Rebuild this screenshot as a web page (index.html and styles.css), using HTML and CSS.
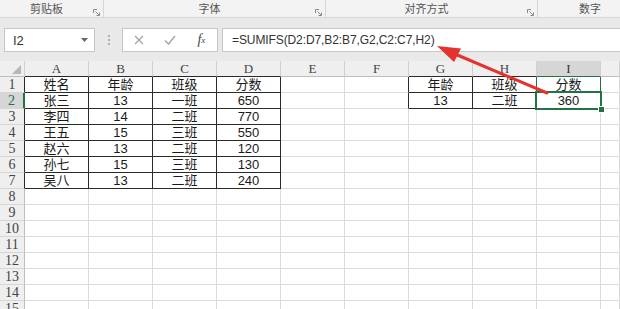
FILE: index.html
```html
<!DOCTYPE html>
<html>
<head>
<meta charset="utf-8">
<link rel="stylesheet" href="styles.css">
</head>
<body>
<div class="app">
  <div class="ribbon">
    <div class="grp w1"><span class="lbl">剪贴板</span><svg class="launch" width="7" height="7" viewBox="0 0 7 7"><path d="M0.5 4V0.5H4" fill="none" stroke="#8a8a8a"/><path d="M2.5 2.5L6 6M6.5 3.5V6.5H3.5" fill="none" stroke="#8a8a8a"/></svg></div>
    <div class="grp w2"><span class="lbl">字体</span><svg class="launch" width="7" height="7" viewBox="0 0 7 7"><path d="M0.5 4V0.5H4" fill="none" stroke="#8a8a8a"/><path d="M2.5 2.5L6 6M6.5 3.5V6.5H3.5" fill="none" stroke="#8a8a8a"/></svg></div>
    <div class="grp w3"><span class="lbl">对齐方式</span><svg class="launch" width="7" height="7" viewBox="0 0 7 7"><path d="M0.5 4V0.5H4" fill="none" stroke="#8a8a8a"/><path d="M2.5 2.5L6 6M6.5 3.5V6.5H3.5" fill="none" stroke="#8a8a8a"/></svg></div>
    <div class="grp w4"><span class="lbl">数字</span></div>
  </div>
  <div class="fbar">
    <div class="namebox"><span class="nm">I2</span><svg width="7" height="4" viewBox="0 0 7 4"><path d="M0 0H7L3.5 4Z" fill="#666"/></svg></div>
    <div class="dots"><i></i><i></i><i></i></div>
    <div class="btns">
      <span class="btn"><svg width="10" height="10" viewBox="0 0 10 10"><path d="M1 1L9 9M9 1L1 9" stroke="#a0a0a0" stroke-width="1.2"/></svg></span>
      <span class="btn"><svg width="12" height="10" viewBox="0 0 12 10"><path d="M1 5.5L4.5 9L11 1" fill="none" stroke="#a0a0a0" stroke-width="1.3"/></svg></span>
      <span class="btn fx"><i>f</i><sub>x</sub></span>
    </div>
    <div class="formula">=SUMIFS(D2:D7,B2:B7,G2,C2:C7,H2)</div>
  </div>
  <div class="sheet">
    <div class="c ch corner"><svg width="9" height="9" viewBox="0 0 9 9"><path d="M9 0V9H0Z" fill="#b8b8b8"/></svg></div>
    <div class="c ch tb">A</div><div class="c ch tb">B</div><div class="c ch tb">C</div><div class="c ch tb">D</div>
    <div class="c ch">E</div><div class="c ch">F</div><div class="c ch tb">G</div><div class="c ch tb">H</div><div class="c ch selcol">I</div><div class="c ch"></div>

    <div class="c rh tr">1</div>
    <div class="c t">姓名</div><div class="c t">年龄</div><div class="c t">班级</div><div class="c t">分数</div>
    <div class="c"></div><div class="c tr"></div><div class="c t">年龄</div><div class="c t gr">班级</div><div class="c gr">分数</div><div class="c"></div>

    <div class="c rh act">2</div>
    <div class="c t">张三</div><div class="c t">13</div><div class="c t">一班</div><div class="c t">650</div>
    <div class="c"></div><div class="c tr"></div><div class="c t">13</div><div class="c t">二班</div><div class="c t">360</div><div class="c"></div>

    <div class="c rh tr">3</div>
    <div class="c t">李四</div><div class="c t">14</div><div class="c t">二班</div><div class="c t">770</div>
    <div class="c"></div><div class="c"></div><div class="c"></div><div class="c"></div><div class="c"></div><div class="c"></div>

    <div class="c rh tr">4</div>
    <div class="c t">王五</div><div class="c t">15</div><div class="c t">三班</div><div class="c t">550</div>
    <div class="c"></div><div class="c"></div><div class="c"></div><div class="c"></div><div class="c"></div><div class="c"></div>

    <div class="c rh tr">5</div>
    <div class="c t">赵六</div><div class="c t">13</div><div class="c t">二班</div><div class="c t">120</div>
    <div class="c"></div><div class="c"></div><div class="c"></div><div class="c"></div><div class="c"></div><div class="c"></div>

    <div class="c rh tr">6</div>
    <div class="c t">孙七</div><div class="c t">15</div><div class="c t">三班</div><div class="c t">130</div>
    <div class="c"></div><div class="c"></div><div class="c"></div><div class="c"></div><div class="c"></div><div class="c"></div>

    <div class="c rh tr">7</div>
    <div class="c t">吴八</div><div class="c t">13</div><div class="c t">二班</div><div class="c t">240</div>
    <div class="c"></div><div class="c"></div><div class="c"></div><div class="c"></div><div class="c"></div><div class="c"></div>

    <div class="c rh">8</div>
    <div class="c"></div><div class="c"></div><div class="c"></div><div class="c"></div><div class="c"></div><div class="c"></div><div class="c"></div><div class="c"></div><div class="c"></div><div class="c"></div>
    <div class="c rh">9</div>
    <div class="c"></div><div class="c"></div><div class="c"></div><div class="c"></div><div class="c"></div><div class="c"></div><div class="c"></div><div class="c"></div><div class="c"></div><div class="c"></div>
    <div class="c rh">10</div>
    <div class="c"></div><div class="c"></div><div class="c"></div><div class="c"></div><div class="c"></div><div class="c"></div><div class="c"></div><div class="c"></div><div class="c"></div><div class="c"></div>
    <div class="c rh">11</div>
    <div class="c"></div><div class="c"></div><div class="c"></div><div class="c"></div><div class="c"></div><div class="c"></div><div class="c"></div><div class="c"></div><div class="c"></div><div class="c"></div>
    <div class="c rh">12</div>
    <div class="c"></div><div class="c"></div><div class="c"></div><div class="c"></div><div class="c"></div><div class="c"></div><div class="c"></div><div class="c"></div><div class="c"></div><div class="c"></div>
    <div class="c rh">13</div>
    <div class="c"></div><div class="c"></div><div class="c"></div><div class="c"></div><div class="c"></div><div class="c"></div><div class="c"></div><div class="c"></div><div class="c"></div><div class="c"></div>
    <div class="c rh">14</div>
    <div class="c"></div><div class="c"></div><div class="c"></div><div class="c"></div><div class="c"></div><div class="c"></div><div class="c"></div><div class="c"></div><div class="c"></div><div class="c"></div>
    <div class="c rh">15</div>
    <div class="c"></div><div class="c"></div><div class="c"></div><div class="c"></div><div class="c"></div><div class="c"></div><div class="c"></div><div class="c"></div><div class="c"></div><div class="c"></div>

    <div class="sel"><span class="handle"></span></div>
  </div>
  <svg class="arrow" width="620" height="309" viewBox="0 0 620 309">
    <line x1="547" y1="93" x2="455" y2="54" stroke="#e5322d" stroke-width="3" stroke-linecap="round"/>
    <polygon points="437,46 461,48.5 454,62" fill="#e5322d"/>
  </svg>
</div>
</body>
</html>
```

FILE: styles.css
```css
html, body {
  margin: 0;
  padding: 0;
  background: #fff;
}

.app {
  position: relative;
  width: 620px;
  height: 309px;
  overflow: hidden;
  background: #fff;
  font-family: "Liberation Sans", "Noto Sans CJK SC", sans-serif;
}

/* Ribbon group labels */
.ribbon {
  display: flex;
  height: 18px;
  box-sizing: border-box;
  background: #f3f3f3;
  border-bottom: 1px solid #d8d8d8;
  overflow: hidden;
}

.grp {
  display: flex;
  align-items: center;
  box-sizing: border-box;
  height: 17px;
  border-right: 1px solid #d6d6d6;
  flex: none;
}

.w1 { width: 104px; }
.w2 { width: 222px; }
.w3 { width: 212px; }
.w4 { width: 104px; border-right: none; }

.lbl {
  flex: 1;
  text-align: center;
  font-family: "Noto Sans CJK SC", sans-serif;
  font-size: 11px;
  line-height: 17px;
  color: #555;
}

.launch {
  flex: none;
  align-self: flex-end;
  margin: 0 3px 1px 0;
}

/* Formula bar */
.fbar {
  display: flex;
  height: 43px;
  box-sizing: border-box;
  padding: 10px 0 9px 4px;
  background: #e9e9e9;
}

.namebox {
  width: 91px;
  flex: none;
  box-sizing: border-box;
  border: 1px solid #c6c6c6;
  background: #fff;
  display: flex;
  align-items: center;
  padding: 0 6px 0 8px;
  font-size: 13px;
  color: #333;
}

.nm { flex: 1; }

.dots {
  width: 27px;
  flex: none;
  display: flex;
  flex-direction: column;
  align-items: center;
  justify-content: center;
  gap: 2px;
}

.dots i {
  display: block;
  width: 2px;
  height: 2px;
  background: #b0b0b0;
}

.btns {
  width: 96px;
  flex: none;
  box-sizing: border-box;
  border: 1px solid #c6c6c6;
  background: #fff;
  display: flex;
}

.btn {
  flex: 1;
  display: flex;
  align-items: center;
  justify-content: center;
}

.fx {
  font-family: "Liberation Serif", serif;
  color: #444;
  font-size: 14px;
}

.fx i { font-style: italic; }
.fx sub { font-size: 9px; font-style: italic; vertical-align: -2px; }

.formula {
  flex: 1;
  margin-left: 4px;
  margin-right: -6px;
  box-sizing: border-box;
  border: 1px solid #c6c6c6;
  background: #fff;
  padding-left: 9px;
  font-size: 12px;
  letter-spacing: -0.1px;
  line-height: 22px;
  color: #333;
  white-space: nowrap;
}

/* Sheet grid */
.sheet {
  position: relative;
  display: grid;
  grid-template-columns: 25px repeat(9, 64px) 1fr;
  grid-auto-rows: 16px;
}

.c {
  box-sizing: border-box;
  border-right: 1px solid #dadada;
  border-bottom: 1px solid #dadada;
  text-align: center;
  font-size: 13px;
  line-height: 15px;
  color: #1a1a1a;
  white-space: nowrap;
  overflow: hidden;
}

.ch {
  background: #efefef;
  border-right-color: #d0d0d0;
  border-bottom-color: #bdbdbd;
  font-family: "Liberation Serif", serif;
  font-size: 13px;
  color: #444;
}

.rh {
  background: #efefef;
  border-right-color: #bdbdbd;
  border-bottom-color: #d6d6d6;
  font-family: "Liberation Serif", serif;
  font-size: 14px;
  color: #444;
}

.corner {
  display: flex;
  justify-content: flex-end;
  align-items: flex-end;
  padding: 0 3px 2px 0;
}

.t {
  border-right-color: #2a2a2a;
  border-bottom-color: #2a2a2a;
}

.tr { border-right-color: #2a2a2a; }
.tb { border-bottom-color: #2a2a2a; }
.gr { border-right-color: #217346; }

.selcol {
  background: #d6d6d6;
  border-bottom-color: #217346;
  color: #333;
}

.act {
  background: #d6d6d6;
  border-right: 2px solid #217346;
  color: #217346;
}

.sel {
  position: absolute;
  left: 535px;
  top: 30px;
  width: 67px;
  height: 19px;
  box-sizing: border-box;
  border: 2px solid #217346;
}

.handle {
  position: absolute;
  left: 61px;
  top: 13px;
  width: 5px;
  height: 5px;
  background: #217346;
  border: 1px solid #fff;
}

.arrow {
  position: absolute;
  left: 0;
  top: 0;
  pointer-events: none;
}
```
